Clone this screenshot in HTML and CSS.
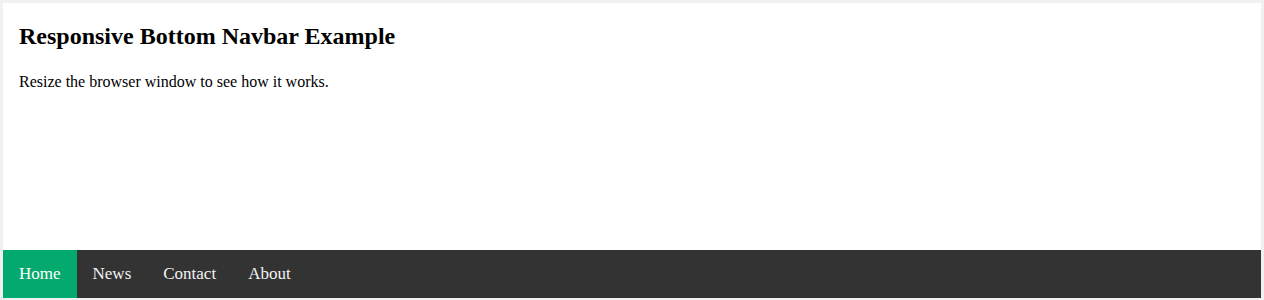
FILE: index.html
```html
<!DOCTYPE html>
<html>
<head>
<meta charset="utf-8">
<link rel="stylesheet" href="styles.css">
</head>
<body>
<div class="frame">
  <div class="content">
    <h2 class="title">Responsive Bottom Navbar Example</h2>
    <p class="lead">Resize the browser window to see how it works.</p>
  </div>
  <nav class="navbar">
    <a href="#home" class="nav-link active">Home</a>
    <a href="#news" class="nav-link">News</a>
    <a href="#contact" class="nav-link">Contact</a>
    <a href="#about" class="nav-link">About</a>
  </nav>
</div>
</body>
</html>
```
FILE: styles.css
```css
html, body {
  margin: 0;
  padding: 0;
  height: 300px;
  overflow: hidden;
}
body {
  background: #f1f1f1;
  font-family: "Liberation Serif", "Times New Roman", serif;
  color: #000;
}
.frame {
  margin: 3px 3px 2px 3px;
  height: 295px;
  background: #fff;
  display: flex;
  flex-direction: column;
}
.content {
  padding: 1px 16px 0 16px;
  flex: 1;
}
.title {
  font-size: 24px;
  font-weight: bold;
  margin: 19px 0 23px 0;
}
.lead {
  font-size: 16px;
  margin: 0;
}
.navbar {
  display: flex;
  background: #333;
  height: 48px;
}
.nav-link {
  display: block;
  color: #f2f2f2;
  text-decoration: none;
  font-size: 17px;
  padding: 14px 16px;
  line-height: 20px;
}
.nav-link.active {
  background: #04aa6d;
  color: #fff;
}
```
